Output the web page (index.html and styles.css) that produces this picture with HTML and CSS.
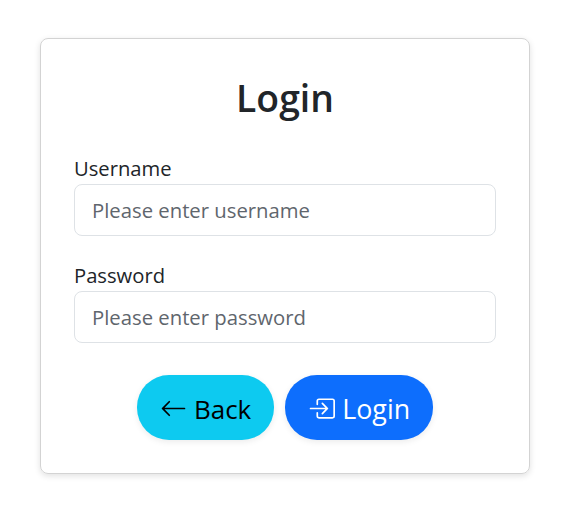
FILE: index.html
```html
<!DOCTYPE html>
<html lang="en">
<head>
  <meta charset="UTF-8" />
  <title>Login</title>
  <link rel="stylesheet" href="styles.css">
</head>
<body>

  <div class="card">
    <h2 class="title">Login</h2>

    <div class="field">
      <label class="field-label" for="username">Username</label>
      <input type="text" id="username" class="input-field" placeholder="Please enter username" />
    </div>

    <div class="field">
      <label class="field-label" for="password">Password</label>
      <input type="password" id="password" class="input-field" placeholder="Please enter password" />
    </div>

    <div class="actions">
      <button class="btn btn-back">
        <svg class="icon" viewBox="0 0 16 16" fill="currentColor"><path fill-rule="evenodd" d="M15 8a.5.5 0 0 0-.5-.5H2.707l3.147-3.146a.5.5 0 1 0-.708-.708l-4 4a.5.5 0 0 0 0 .708l4 4a.5.5 0 0 0 .708-.708L2.707 8.5H14.5A.5.5 0 0 0 15 8z"/></svg>
        Back
      </button>
      <button class="btn btn-login">
        <svg class="icon" viewBox="0 0 16 16" fill="currentColor"><path fill-rule="evenodd" d="M6 3.5a.5.5 0 0 1 .5-.5h8a.5.5 0 0 1 .5.5v9a.5.5 0 0 1-.5.5h-8a.5.5 0 0 1-.5-.5v-2a.5.5 0 0 0-1 0v2A1.5 1.5 0 0 0 6.5 14h8a1.5 1.5 0 0 0 1.5-1.5v-9A1.5 1.5 0 0 0 14.5 2h-8A1.5 1.5 0 0 0 5 3.5v2a.5.5 0 0 0 1 0v-2z"/><path fill-rule="evenodd" d="M11.854 8.354a.5.5 0 0 0 0-.708l-3-3a.5.5 0 1 0-.708.708L10.293 7.5H1.5a.5.5 0 0 0 0 1h8.793l-2.147 2.146a.5.5 0 0 0 .708.708l3-3z"/></svg>
        Login
      </button>
    </div>
  </div>

</body>
</html>
```

FILE: styles.css
```css
body {
  margin: 0;
  padding: 38px 43px 43px 40px;
  background: #fff;
  font-family: "Open Sans", "Noto Sans", sans-serif;
  color: #212529;
}

.card {
  padding: 32px 33px 33px;
  border: 1px solid #d3d3d3;
  border-radius: 8px;
  box-shadow: 0 2px 6px rgba(0, 0, 0, 0.12);
}

.title {
  margin: 0 0 28px;
  font-size: 37.3px;
  font-weight: 600;
  line-height: 54px;
  text-align: center;
}

.field {
  margin-bottom: 24.5px;
}

.field-label {
  display: block;
  font-size: 20.2px;
  line-height: 30.5px;
}

.input-field {
  display: block;
  box-sizing: border-box;
  width: 100%;
  height: 51.5px;
  margin-top: 0.5px;
  padding: 0 17px;
  border: 1px solid #dee2e6;
  border-radius: 8px;
  font-family: inherit;
  font-size: 20.3px;
  color: #212529;
}

.input-field::placeholder {
  color: #5f666d;
}

.actions {
  display: flex;
  justify-content: center;
  gap: 11px;
  margin-top: 32.5px;
}

.btn {
  display: flex;
  align-items: center;
  gap: 7px;
  height: 65px;
  padding: 2px 23px 0;
  border: none;
  border-radius: 32px;
  font-family: inherit;
  font-size: 26px;
  box-shadow: 0 2px 6px rgba(0, 0, 0, 0.08);
}

.btn-back {
  background: #0dcaf0;
  color: #000;
}

.btn-login {
  background: #0d6efd;
  color: #fff;
  font-size: 26.8px;
}

.icon {
  width: 27px;
  height: 27px;
}
```
